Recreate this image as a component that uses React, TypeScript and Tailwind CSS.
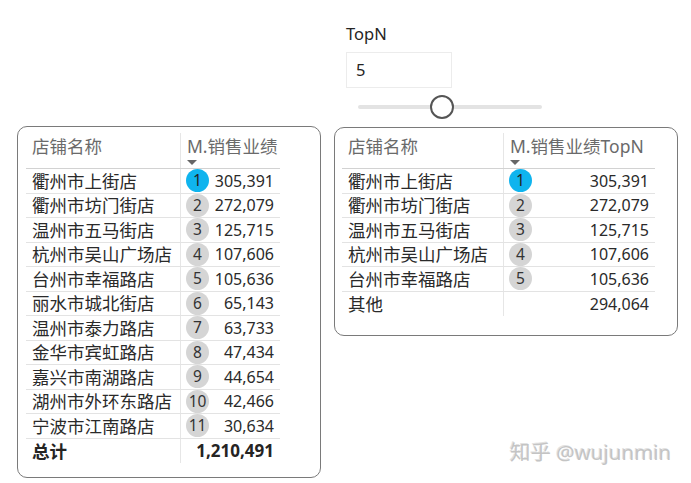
import React from "react";

const leftRows: [string, number, string][] = [
  ["衢州市上街店", 1, "305,391"],
  ["衢州市坊门街店", 2, "272,079"],
  ["温州市五马街店", 3, "125,715"],
  ["杭州市吴山广场店", 4, "107,606"],
  ["台州市幸福路店", 5, "105,636"],
  ["丽水市城北街店", 6, "65,143"],
  ["温州市泰力路店", 7, "63,733"],
  ["金华市宾虹路店", 8, "47,434"],
  ["嘉兴市南湖路店", 9, "44,654"],
  ["湖州市外环东路店", 10, "42,466"],
  ["宁波市江南路店", 11, "30,634"],
];

function Badge({ n }: { n: number }) {
  return (
    <span
      className={
        n === 1
          ? "inline-flex h-[23px] w-[23px] shrink-0 items-center justify-center rounded-full bg-[#0fb4ee] text-[15.5px] leading-none text-[#222]"
          : "inline-flex h-[23px] w-[23px] shrink-0 items-center justify-center rounded-full bg-[#d5d5d5] text-[15.5px] leading-none text-[#333]"
      }
    >
      {n}
    </span>
  );
}

function Header({ c1, c2, w1 }: { c1: string; c2: string; w1: string }) {
  return (
    <div className="flex h-[36px] border-b border-[#d2d2d2]">
      <div className={`${w1} pl-[6px] pt-[1px] text-[17.5px] leading-[24px] text-[#6a6a6a]`}>{c1}</div>
      <div className="flex flex-1 flex-col border-l border-[#e6e6e6] pl-[6px] pt-[1px]">
        <span className="whitespace-nowrap text-[17.5px] leading-[24px] text-[#6a6a6a]">{c2}</span>
        <span className="mt-[2px] h-0 w-0 border-x-[5.5px] border-t-[5px] border-x-transparent border-t-[#666]" />
      </div>
    </div>
  );
}

function Row({ name, n, num, w1, last }: { name: string; n?: number; num: string; w1: string; last?: boolean }) {
  return (
    <div className={last ? "flex h-[24.5px]" : "flex h-[24.5px] border-b border-[#e3e3e3]"}>
      <div className={`${w1} flex items-center whitespace-nowrap pl-[6px] text-[17.5px] leading-[24px] text-[#2a2a2a]`}>
        {name}
      </div>
      <div className="flex flex-1 items-center border-l border-[#e6e6e6] pl-[5px] pr-[6px]">
        {n !== undefined ? <Badge n={n} /> : null}
        <span className="ml-auto text-[16px] leading-[24px] text-[#2a2a2a]">{num}</span>
      </div>
    </div>
  );
}

export default function App() {
  return (
    <div className="relative h-[483px] w-[691px] overflow-hidden bg-white font-[family-name:Noto_Sans,Noto_Sans_CJK_SC,sans-serif]">
      <div className="pl-[346px] pt-[23px]">
        <div className="text-[16.5px] leading-[22px] text-[#252423]">TopN</div>
        <div className="mt-[7px] flex h-[36px] w-[106px] items-center border border-[#ececec] pl-[9px] text-[16.5px] text-[#252423]">
          5
        </div>
        <div className="ml-[12px] mt-[7px] flex h-[24px] w-[184px] items-center">
          <div className="h-[4px] w-[72px] rounded-l-full bg-[#e3e3e3]" />
          <div className="h-[24px] w-[24px] shrink-0 rounded-full border-2 border-[#555] bg-white" />
          <div className="h-[4px] flex-1 rounded-r-full bg-[#e3e3e3]" />
        </div>
      </div>

      <div className="mt-[7px] flex items-start gap-[13px] pl-[17px]">
        <div className="h-[352px] w-[304px] rounded-[10px] border border-[#7a7a7a] pl-[8px] pt-[6px]">
          <div className="w-[254px]">
            <Header c1="店铺名称" c2="M.销售业绩" w1="w-[154px]" />
            {leftRows.map((r) => (
              <Row key={r[0]} name={r[0]} n={r[1]} num={r[2]} w1="w-[154px]" />
            ))}
            <div className="flex h-[24.5px]">
              <div className="flex w-[154px] items-center pl-[6px] text-[17.5px] font-bold leading-[24px] text-[#252423]">
                总计
              </div>
              <div className="flex flex-1 items-center justify-end border-l border-[#e6e6e6] pr-[6px] text-[17px] font-bold leading-[24px] text-[#252423]">
                1,210,491
              </div>
            </div>
          </div>
        </div>

        <div className="mt-[1px] h-[209px] w-[344px] rounded-[10px] border border-[#7a7a7a] pl-[7px] pt-[5px]">
          <div className="w-[313px]">
            <Header c1="店铺名称" c2="M.销售业绩TopN" w1="w-[161px]" />
            {leftRows.slice(0, 5).map((r) => (
              <Row key={r[0]} name={r[0]} n={r[1]} num={r[2]} w1="w-[161px]" />
            ))}
            <Row name="其他" num="294,064" w1="w-[161px]" last />
          </div>
        </div>
      </div>

      <div className="absolute left-[510px] top-[437px] whitespace-nowrap text-[20.5px] leading-[30px] text-[#c4c4c4] [text-shadow:1px_1px_0_#ffffff,-1px_-1px_0_#e2e2e2]">
        知乎 @wujunmin
      </div>
    </div>
  );
}
